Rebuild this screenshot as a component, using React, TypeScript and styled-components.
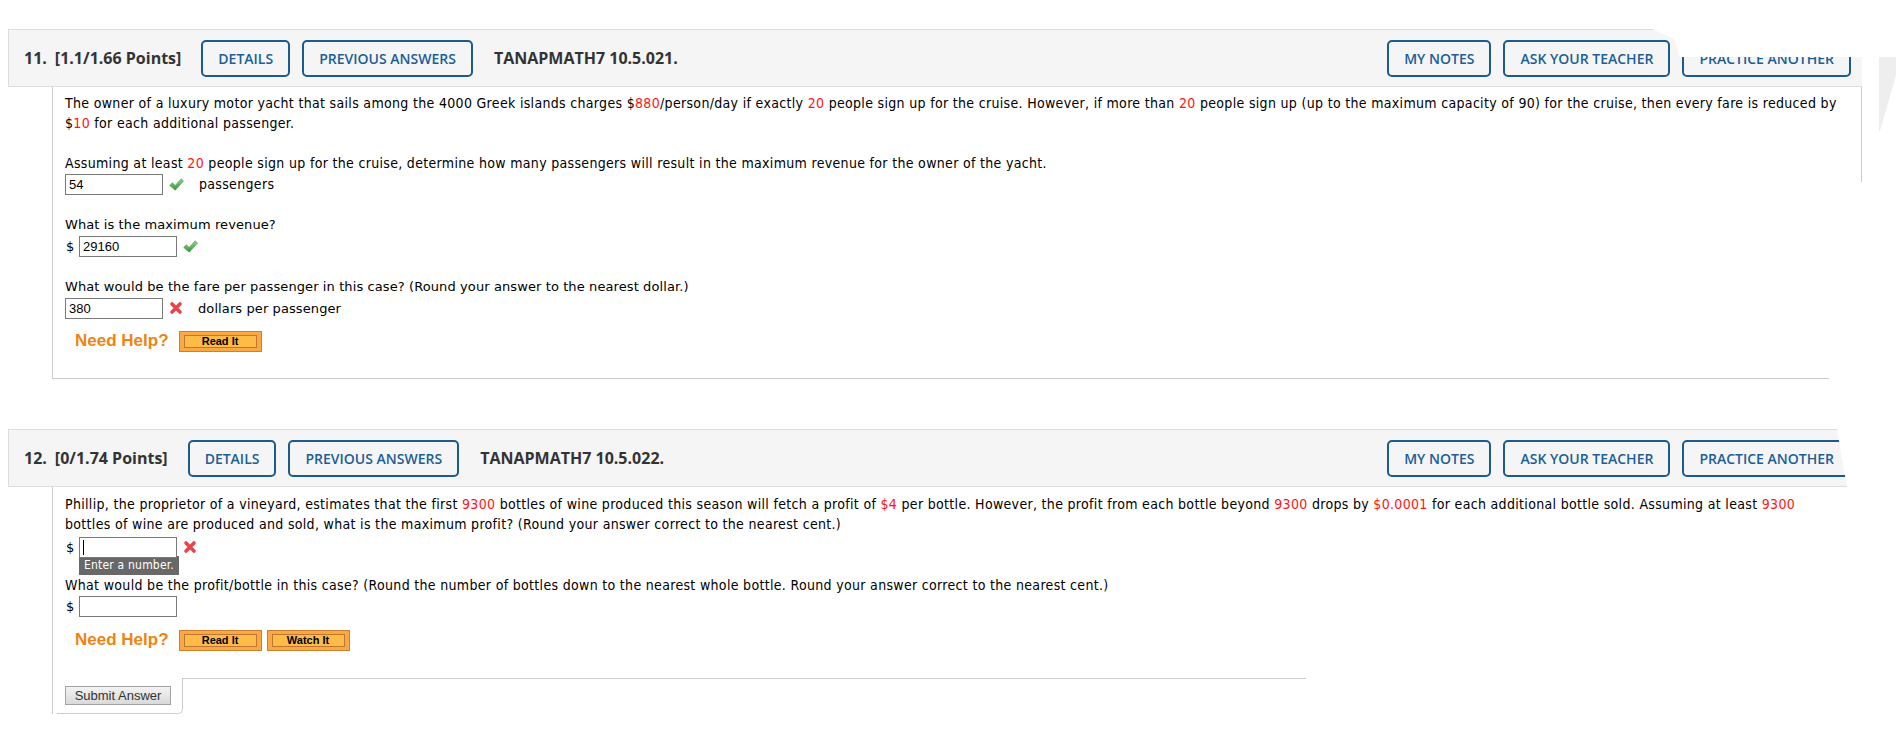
import React from "react";
import styled, { createGlobalStyle, css } from "styled-components";

const GlobalStyle = createGlobalStyle`
  html, body { margin: 0; padding: 0; background: #ffffff; }
  body { overflow: hidden; }
`;

const condensed = css`
  font-family: "DejaVu Sans Condensed", "DejaVu Sans", Tahoma, sans-serif;
  font-stretch: condensed;
  font-size: 14px;
  letter-spacing: 0.32px;
`;
const wide = css`
  font-family: "DejaVu Sans", Verdana, sans-serif;
  font-size: 13px;
  letter-spacing: 0.1px;
`;

const Page = styled.main`
  position: relative;
  box-sizing: border-box;
  width: 1896px;
  height: 751px;
  padding: 29px 0 0 8px;
  color: #000;
  overflow: hidden;
`;

const Question = styled.section`
  & + & {
    margin-top: 50px;
  }
`;

const Header = styled.header<{ $cut?: boolean }>`
  box-sizing: border-box;
  width: 1854px;
  height: 58px;
  display: flex;
  align-items: center;
  padding: 0 11px 0 15px;
  background: #f5f5f5;
  border: 1px solid #dddddd;
  border-right: none;
  font-family: "Open Sans", "Liberation Sans", sans-serif;
  ${(p) =>
    p.$cut &&
    css`
      clip-path: polygon(0 0, 1829px 0, 1839px 100%, 0 100%);
    `}
`;

const Title = styled.h2`
  margin: 0 20px 0 0;
  display: flex;
  gap: 8px;
  font-size: 16px;
  font-weight: 700;
  color: #333;
  white-space: nowrap;
`;

const Code = styled.span`
  margin-left: 21px;
  font-size: 16px;
  font-weight: 700;
  color: #333;
  white-space: nowrap;
`;

const ButtonGroup = styled.div<{ $end?: boolean }>`
  display: flex;
  gap: 12px;
  ${(p) => p.$end && "margin-left: auto;"}
`;

const HeaderButton = styled.button`
  box-sizing: border-box;
  height: 37px;
  padding: 0 15px;
  border: 2px solid #1b5b90;
  border-radius: 5px;
  background: transparent;
  color: #1c5e98;
  font-family: "Open Sans", "Liberation Sans", sans-serif;
  font-size: 14px;
  font-weight: 600;
  text-transform: uppercase;
  white-space: nowrap;
  cursor: pointer;
`;

const Body = styled.div<{ $closed?: boolean }>`
  position: relative;
  box-sizing: border-box;
  width: 1777px;
  margin-left: 44px;
  padding: ${(p) => (p.$closed ? "6px 0 26px 12px" : "7px 0 0 12px")};
  border-left: 1px solid #cccccc;
  ${(p) =>
    p.$closed &&
    css`
      border-bottom: 1px solid #cccccc;
      &::after {
        content: "";
        position: absolute;
        left: 1808px;
        top: 0;
        width: 1px;
        height: 95px;
        background: #cccccc;
      }
    `}
`;

const Stem = styled.p`
  margin: 0;
  ${condensed};
  line-height: 20px;
  white-space: nowrap;
`;

const Num = styled.span`
  color: #ff1414;
`;

const Prompt = styled.div<{ $wide?: boolean; $top?: number }>`
  ${(p) => (p.$wide ? wide : condensed)};
  line-height: 20px;
  white-space: nowrap;
  margin-top: ${(p) => p.$top ?? 0}px;
`;

const AnswerRow = styled.div<{ $top?: number }>`
  display: flex;
  align-items: center;
  height: 22px;
  margin-top: ${(p) => p.$top ?? 0}px;
`;

const Dollar = styled.span`
  ${wide};
  width: 14px;
  padding-left: 1px;
  box-sizing: border-box;
`;

const AnswerBox = styled.div`
  box-sizing: border-box;
  width: 98px;
  height: 21px;
  display: flex;
  align-items: center;
  border: 1px solid #7a7a7a;
  padding: 0 3px;
  font-family: "Liberation Sans", Arial, sans-serif;
  font-size: 13px;
  color: #000;
  background: #fff;
`;

const Caret = styled.span`
  width: 1px;
  height: 15px;
  background: #000;
`;

const Mark = styled.span`
  display: inline-flex;
  margin-left: 6px;
`;

const Unit = styled.span<{ $wide?: boolean }>`
  ${(p) => (p.$wide ? wide : condensed)};
  margin-left: 15px;
`;

const Tip = styled.div`
  box-sizing: border-box;
  width: 100px;
  height: 19px;
  margin: -2px 0 0 14px;
  padding-left: 5px;
  background: #686868;
  color: #fff;
  font-family: "DejaVu Sans Condensed", "DejaVu Sans", Tahoma, sans-serif;
  font-stretch: condensed;
  font-size: 12px;
  letter-spacing: 0.2px;
  line-height: 19px;
  white-space: nowrap;
`;

const HelpRow = styled.div<{ $top: number }>`
  display: flex;
  align-items: center;
  height: 22px;
  margin-top: ${(p) => p.$top}px;
  padding-left: 10px;
`;

const NeedHelp = styled.span`
  font-family: "Liberation Sans", Arial, sans-serif;
  font-weight: 700;
  font-size: 17px;
  color: #f0840f;
  margin-right: 10px;
`;

const HelpButton = styled.button`
  box-sizing: border-box;
  width: 83px;
  height: 21px;
  padding: 3px 4px;
  border: 1px solid #d07f2a;
  background: #f9a843;
  cursor: pointer;
  & + & {
    margin-left: 5px;
  }
`;

const HelpFace = styled.span`
  display: block;
  box-sizing: border-box;
  height: 13px;
  border: 1px solid #bf7630;
  background: #ffbb48;
  font-family: "Liberation Sans", Arial, sans-serif;
  font-weight: 700;
  font-size: 11px;
  line-height: 11px;
  color: #000;
  text-align: center;
`;

const Footer = styled.div`
  display: flex;
  align-items: flex-start;
  margin: 27px 0 -7px -8px;
`;

const SubmitTab = styled.div`
  padding: 8px 11px 8px 8px;
  border-right: 1px solid #cccccc;
  border-bottom: 1px solid #cccccc;
  border-bottom-right-radius: 5px;
`;

const SubmitButton = styled.button`
  display: block;
  box-sizing: border-box;
  width: 106px;
  height: 19px;
  padding: 0;
  border: 1px solid #a3a3a3;
  background: linear-gradient(#f3f3f3, #d9d9d9);
  font-family: "Liberation Sans", Arial, sans-serif;
  font-size: 13px;
  line-height: 17px;
  color: #333;
  cursor: pointer;
`;

const FooterLine = styled.div`
  width: 1123px;
  border-top: 1px solid #cccccc;
`;

const WhiteWedge = styled.div`
  position: absolute;
  left: 1650px;
  top: 28px;
  width: 246px;
  height: 29px;
  background: #ffffff;
  clip-path: polygon(0 0, 100% 0, 100% 100%, 30px 100%, 24px 11px);
`;

const GreyWedge = styled.div`
  position: absolute;
  left: 1879px;
  top: 57px;
  width: 17px;
  height: 74px;
  background: #eeeeee;
  clip-path: polygon(0 0, 100% 0, 100% 25%, 6% 100%, 0 100%);
`;

const CheckMark = () => (
  <svg width="15" height="13" viewBox="0 0 15 13" aria-hidden="true">
    <defs>
      <linearGradient id="chkGrad" x1="0" y1="0" x2="0" y2="1">
        <stop offset="0" stopColor="#92d492" />
        <stop offset="1" stopColor="#389438" />
      </linearGradient>
    </defs>
    <path
      d="M0.7 7.4 L3.3 4.8 L6.2 7.4 L12.2 0.8 L14.5 3.1 L6.3 12.2 Z"
      fill="url(#chkGrad)"
      stroke="#479747"
      strokeWidth="0.6"
      strokeLinejoin="round"
    />
  </svg>
);

const CrossMark = () => (
  <svg width="14" height="14" viewBox="0 0 14 14" aria-hidden="true">
    <path
      d="M3 3 L11 11 M11 3 L3 11"
      stroke="#e8454a"
      strokeWidth="3.6"
      strokeLinecap="round"
    />
  </svg>
);

type HeadProps = { num: string; points: string; code: string; cut?: boolean };

const QuestionHeader = ({ num, points, code, cut }: HeadProps) => (
  <Header $cut={cut}>
    <Title>
      <span>{num}</span>
      <span>{points}</span>
    </Title>
    <ButtonGroup>
      <HeaderButton>Details</HeaderButton>
      <HeaderButton>Previous Answers</HeaderButton>
    </ButtonGroup>
    <Code>{code}</Code>
    <ButtonGroup $end>
      <HeaderButton>My Notes</HeaderButton>
      <HeaderButton>Ask Your Teacher</HeaderButton>
      <HeaderButton>Practice Another</HeaderButton>
    </ButtonGroup>
  </Header>
);

export default function App() {
  return (
    <>
      <GlobalStyle />
      <Page>
        <Question>
          <QuestionHeader num="11." points="[1.1/1.66 Points]" code="TANAPMATH7 10.5.021." />
          <Body $closed>
            <Stem>
              The owner of a luxury motor yacht that sails among the 4000 Greek islands charges $<Num>880</Num>
              /person/day if exactly <Num>20</Num> people sign up for the cruise. However, if more than{" "}
              <Num>20</Num> people sign up (up to the maximum capacity of 90) for the cruise, then every fare is
              reduced by
              <br />$<Num>10</Num> for each additional passenger.
            </Stem>
            <Prompt $top={20}>
              Assuming at least <Num>20</Num> people sign up for the cruise, determine how many passengers will
              result in the maximum revenue for the owner of the yacht.
            </Prompt>
            <AnswerRow>
              <AnswerBox>54</AnswerBox>
              <Mark>
                <CheckMark />
              </Mark>
              <Unit>passengers</Unit>
            </AnswerRow>
            <Prompt $wide $top={20}>
              What is the maximum revenue?
            </Prompt>
            <AnswerRow>
              <Dollar>$</Dollar>
              <AnswerBox>29160</AnswerBox>
              <Mark>
                <CheckMark />
              </Mark>
            </AnswerRow>
            <Prompt $wide $top={20}>
              What would be the fare per passenger in this case? (Round your answer to the nearest dollar.)
            </Prompt>
            <AnswerRow>
              <AnswerBox>380</AnswerBox>
              <Mark>
                <CrossMark />
              </Mark>
              <Unit $wide>dollars per passenger</Unit>
            </AnswerRow>
            <HelpRow $top={11}>
              <NeedHelp>Need Help?</NeedHelp>
              <HelpButton>
                <HelpFace>Read It</HelpFace>
              </HelpButton>
            </HelpRow>
          </Body>
        </Question>

        <Question>
          <QuestionHeader num="12." points="[0/1.74 Points]" code="TANAPMATH7 10.5.022." cut />
          <Body>
            <Stem>
              Phillip, the proprietor of a vineyard, estimates that the first <Num>9300</Num> bottles of wine
              produced this season will fetch a profit of <Num>$4</Num> per bottle. However, the profit from each
              bottle beyond <Num>9300</Num> drops by <Num>$0.0001</Num> for each additional bottle sold. Assuming
              at least <Num>9300</Num>
              <br />
              bottles of wine are produced and sold, what is the maximum profit? (Round your answer correct to the
              nearest cent.)
            </Stem>
            <AnswerRow $top={2}>
              <Dollar>$</Dollar>
              <AnswerBox>
                <Caret />
              </AnswerBox>
              <Mark>
                <CrossMark />
              </Mark>
            </AnswerRow>
            <Tip>Enter a number.</Tip>
            <Prompt>
              What would be the profit/bottle in this case? (Round the number of bottles down to the nearest whole
              bottle. Round your answer correct to the nearest cent.)
            </Prompt>
            <AnswerRow>
              <Dollar>$</Dollar>
              <AnswerBox />
            </AnswerRow>
            <HelpRow $top={12}>
              <NeedHelp>Need Help?</NeedHelp>
              <HelpButton>
                <HelpFace>Read It</HelpFace>
              </HelpButton>
              <HelpButton>
                <HelpFace>Watch It</HelpFace>
              </HelpButton>
            </HelpRow>
            <Footer>
              <SubmitTab>
                <SubmitButton>Submit Answer</SubmitButton>
              </SubmitTab>
              <FooterLine />
            </Footer>
          </Body>
        </Question>

        <WhiteWedge />
        <GreyWedge />
      </Page>
    </>
  );
}
